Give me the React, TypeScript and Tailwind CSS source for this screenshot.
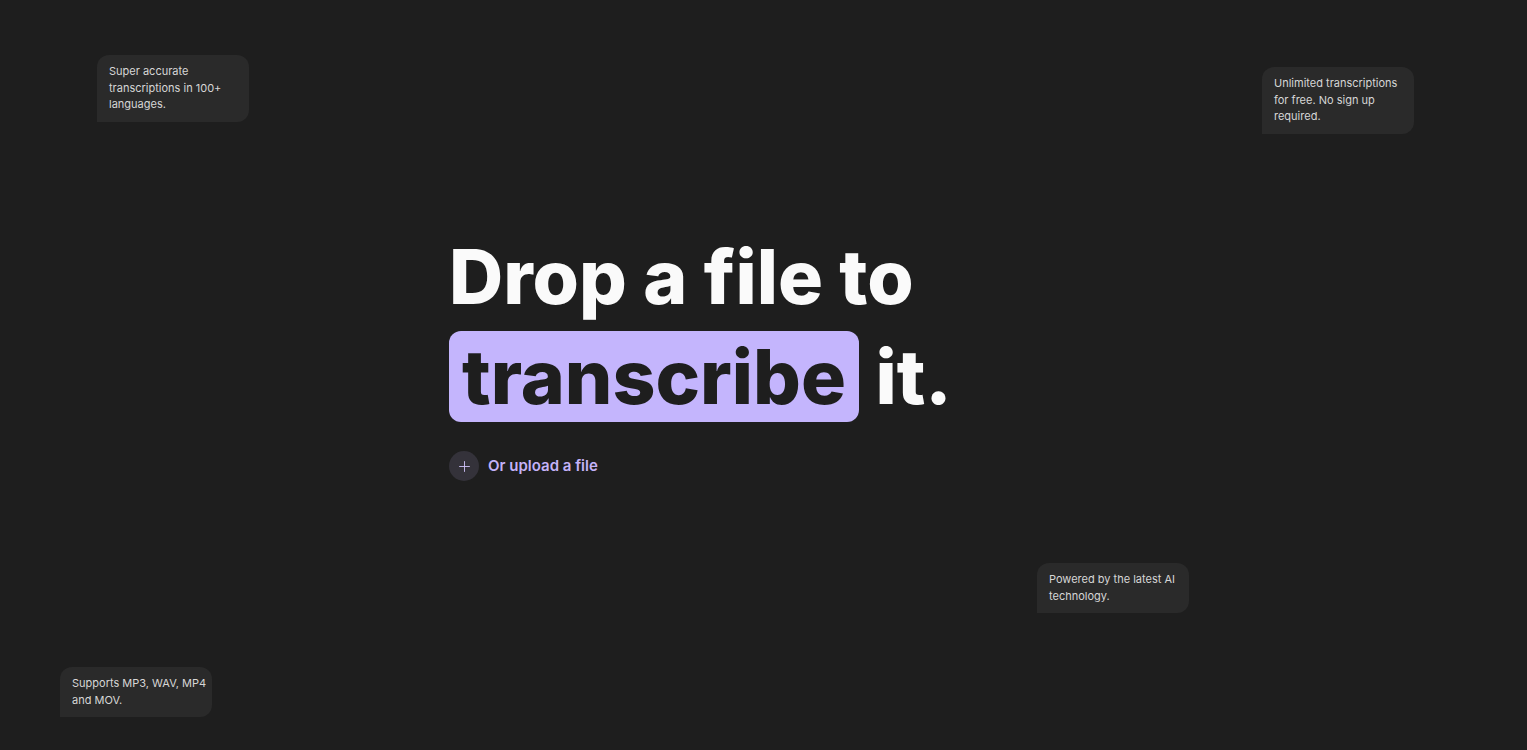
import { Plus } from 'lucide-react';

const notes = [
    { text: 'Super accurate transcriptions in 100+ languages.', pos: 'left-[97px] top-[55px]' },
    { text: 'Unlimited transcriptions for free. No sign up required.', pos: 'left-[1262px] top-[67px]' },
    { text: 'Powered by the latest AI technology.', pos: 'left-[1037px] top-[563px]' },
    { text: 'Supports MP3, WAV, MP4 and MOV.', pos: 'left-[60px] top-[667px]' },
];

export default function App() {
    return (
        <div
            className="relative h-[750px] w-full overflow-hidden bg-[#1e1e1e]"
            style={{ fontFamily: 'Inter, "Noto Sans", sans-serif' }}
        >
            {notes.map((n) => (
                <div
                    key={n.text}
                    className={`absolute ${n.pos} w-[152px] rounded-xl rounded-bl-none bg-[#2a2a2a] pl-3 pr-[5px] pt-2 pb-[9px] text-[11px] leading-[16.5px] text-[#d6d6d6]`}
                >
                    {n.text}
                </div>
            ))}

            <main className="pl-[449px] pt-[227px]">
                <h1 className="text-[75px] font-extrabold leading-[100px] text-[#fafafa]">
                    Drop a file to
                    <br />
                    <span className="rounded-xl bg-[#c4b5fd] px-[13px] text-[#1e1e1e]">transcribe</span> it.
                </h1>

                <button className="mt-6 flex items-center gap-[9px]">
                    <span className="flex h-[30px] w-[30px] items-center justify-center rounded-full bg-[#34323a] text-[#d2c4fc]">
                        <Plus className="h-[17px] w-[17px]" strokeWidth={1.25} />
                    </span>
                    <span className="text-[15px] font-semibold text-[#c4b2f8]">Or upload a file</span>
                </button>
            </main>
        </div>
    );
}
